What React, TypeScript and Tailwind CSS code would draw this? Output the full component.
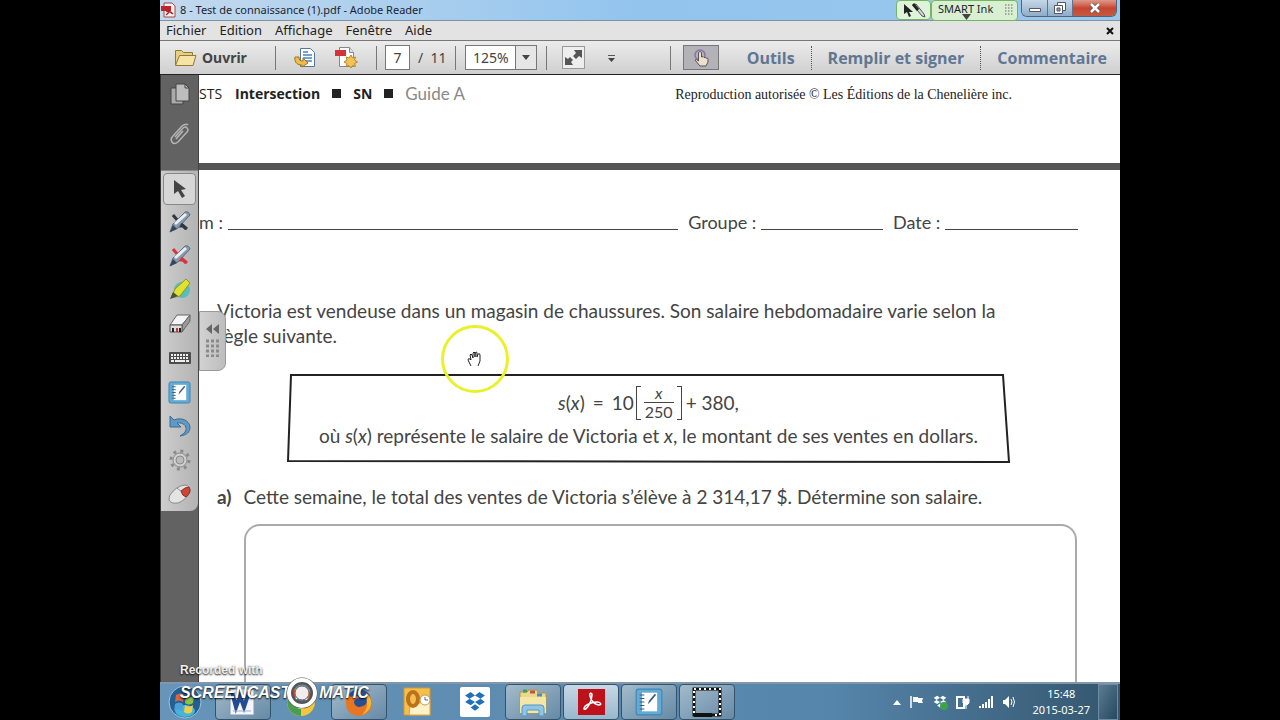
import type { ReactNode } from "react";

function Svg({ w, h, children }: { w: number; h: number; children: ReactNode }) {
  return (
    <svg width={w} height={h} viewBox={`0 0 ${w} ${h}`} fill="none" className="shrink-0" aria-hidden="true">
      {children}
    </svg>
  );
}

function TitleBar() {
  return (
    <header className="flex h-5 items-center bg-linear-to-r from-[#c3d9ed] via-[#92c4ee] to-[#9bc8ec] pl-px text-[11px] text-[#1b2530]">
      <Svg w={15} h={16}>
        <path d="M3 1h8l3 3v11H3z" fill="#f5f0ef" stroke="#9a4a48" />
        <path d="M0 4h10v5H0z" fill="#c3242b" />
        <path d="M5 13c3-2 4-6 4-8M5 9c3 0 5 1 7 3" stroke="#a82a2c" strokeWidth="1.500" />
      </Svg>
      <h1 className="ml-1 whitespace-nowrap">8 - Test de connaissance (1).pdf - Adobe Reader</h1>
      <div className="ml-auto flex h-5 items-start">
        <button aria-label="Stylo" className="flex h-5 w-[35px] items-center justify-center rounded-sm border border-[#72b562] bg-[#dff2da]">
          <Svg w={24} h={15}>
            <path d="M2 1v10l3-2 2 5 2-1-2-4h4z" fill="#222" />
            <path d="M11 2l9 11 3 1-1-3L14 1z" fill="#d5d5d5" stroke="#555" />
            <path d="M11 1l5 6" stroke="#222" strokeWidth="3" />
          </Svg>
        </button>
        <button className="relative flex h-[21px] w-[87px] items-start gap-3 rounded-sm border border-[#72b562] bg-[#d8efd2] pl-[6px] text-[11px] leading-[15px]">
          SMART Ink
          <Svg w={8} h={16}>
            {[4, 7, 10, 13].map((y) => (
              <path key={y} d={`M0 ${y}h1.500M3 ${y}h1.500M6 ${y}h1.500`} stroke="#666" />
            ))}
          </Svg>
          <span className="absolute top-[13px] left-[30px]">
            <Svg w={9} h={6}>
              <path d="M0 0h9L4.500 6z" fill="#444" />
            </Svg>
          </span>
        </button>
        <div className="mr-[3px] ml-[3px] flex h-[17px] overflow-hidden rounded-b-md border border-t-0 border-[#50647a]">
          <button aria-label="Réduire" className="flex w-[26px] items-center justify-center border-r border-[#60758a] bg-linear-to-b from-[#c6d8e8] to-[#8eacc8]">
            <Svg w={12} h={12}>
              <path d="M.5 6.500h11v3H.5z" fill="#fff" stroke="#556" />
            </Svg>
          </button>
          <button aria-label="Niveau inférieur" className="flex w-[25px] items-center justify-center border-r border-[#60758a] bg-linear-to-b from-[#c6d8e8] to-[#8eacc8]">
            <Svg w={12} h={12}>
              <path d="M3.500.5h8v8h-8z" fill="#fff" stroke="#556" />
              <path d="M.5 3.500h8v8h-8z" fill="#fff" stroke="#556" />
              <path d="M3 6h3v3H3z" fill="#8aa" stroke="#556" />
            </Svg>
          </button>
          <button aria-label="Fermer" className="flex w-[43px] items-center justify-center bg-linear-to-b from-[#dc9a8c] via-[#c8452f] to-[#c45a42]">
            <Svg w={12} h={10}>
              <path d="M2 1l8 8M10 1L2 9" stroke="#555" strokeWidth="4" />
              <path d="M2 1l8 8M10 1L2 9" stroke="#fff" strokeWidth="2.500" />
            </Svg>
          </button>
        </div>
      </div>
    </header>
  );
}

function MenuBar() {
  return (
    <nav className="flex h-5 items-center gap-[13px] border-t border-[#7c92a5] bg-[#e3e3e3] px-[6px] text-[13px] text-[#222]">
      {["Fichier", "Edition", "Affichage", "Fenêtre", "Aide"].map((label) => (
        <button key={label}>{label}</button>
      ))}
      <button aria-label="Fermer le document" className="ml-auto">
        <Svg w={8} h={8}>
          <path d="M1 1l6 6M7 1L1 7" stroke="#111" strokeWidth="2" />
        </Svg>
      </button>
    </nav>
  );
}

function Separator() {
  return <span className="h-6 w-px shrink-0 bg-[#777]" />;
}

function ToolBar() {
  return (
    <div className="flex h-[35px] shrink-0 items-center border-t border-b border-t-[#777] border-b-[#222] bg-linear-to-b from-[#ececec] to-[#cfcfcf] pl-[14px] text-[14px] text-[#444]">
      <button className="flex w-[101px] items-center gap-[5px] font-bold">
        <Svg w={23} h={19}>
          <path d="M1.500 17V2.500h6l2 2h9V8" fill="#e8cf82" stroke="#92783a" />
          <path d="M1.500 17.500l4-10h16.500l-3 10z" fill="#f5e4a5" stroke="#92783a" />
        </Svg>
        Ouvrir
      </button>
      <Separator />
      <div className="flex w-[100px] items-center justify-center gap-[18px]">
        <button aria-label="Convertir">
          <Svg w={23} h={21}>
            <path d="M6.500 1.500h10l4 4v14h-14z" fill="#fff" stroke="#587995" />
            <path d="M9 5h5M9 8h9M9 11h9M9 14h9" stroke="#4782bd" strokeWidth="1.500" />
            <path d="M1 10c-1 6 3 8 7 8v2l6-4-5-5v3c-3 0-4-1-4-4z" fill="#f0bd48" stroke="#9f7422" />
          </Svg>
        </button>
        <button aria-label="Créer un PDF">
          <Svg w={23} h={21}>
            <path d="M4.500.5h10l4 5v14h-14z" fill="#fff" stroke="#888" />
            <path d="M14.500.5v5h4" fill="#ddd" stroke="#888" />
            <path d="M0 3h11v6H0z" fill="#d5323a" />
            <path d="M16 8l1.500 3 3-1-1 3 3 2-3 1.500 1 3-3-1L16 21l-2-2.500-3 1 1-3L9 15l3-2-1-3 3 1z" fill="#f4c354" stroke="#b7872d" />
          </Svg>
        </button>
      </div>
      <Separator />
      <input
        aria-label="Page"
        defaultValue="7"
        className="ml-[8px] h-[25px] w-[25px] border border-[#777] bg-white text-center outline-none"
      />
      <span className="ml-[8px] w-[37px] whitespace-nowrap">/&nbsp; 11</span>
      <Separator />
      <div className="relative ml-[9px] h-[25px] w-[72px] border border-[#777] bg-white">
        <select aria-label="Zoom" defaultValue="125%" className="h-full w-full appearance-none pl-[7px] outline-none">
          <option>100%</option>
          <option>125%</option>
          <option>150%</option>
        </select>
        <span className="pointer-events-none absolute inset-y-0 right-0 flex w-[21px] items-center justify-center border-l border-[#777] bg-[#e6e6e6]">
          <Svg w={8} h={5}>
            <path d="M0 0h8L4 5z" fill="#444" />
          </Svg>
        </span>
      </div>
      <span className="w-[9px]" />
      <Separator />
      <button aria-label="Plein écran" className="ml-[15px] flex size-[23px] items-center justify-center border border-[#999] bg-[#eee]">
        <Svg w={19} h={19}>
          <path d="M10 2h8v8l-3-2-3 3-3-3 3-3zM9 17H1V9l3 2 2-2 3 3-2 2z" fill="#555" />
        </Svg>
      </button>
      <button aria-label="Plus d'outils" className="ml-[23px]">
        <Svg w={7} h={8}>
          <path d="M0 1.500h7" stroke="#555" />
          <path d="M0 4h7L3.500 8z" fill="#444" />
        </Svg>
      </button>
      <span className="w-[55px]" />
      <Separator />
      <button aria-label="Main" className="ml-[12px] flex h-[25px] w-[36px] items-center justify-center border border-[#777] bg-[#b3b3b7]">
        <Svg w={18} h={18}>
          <circle cx="8" cy="6" r="5" stroke="#8872a8" strokeWidth="1.500" />
          <path d="M6.500 11V3.500q1.500-2 3 0V8q2-1 2.500.5 2-.5 2 .7 2-.5 2 1V13l-2 4H8l-5-6q1-1.500 3.500 1z" fill="#eee0cd" stroke="#555" />
        </Svg>
      </button>
      <div className="ml-auto flex h-full items-center font-['Open_Sans',sans-serif] text-[16px] font-bold text-[#607693]">
        <button className="px-4">Outils</button>
        <span className="h-6 border-l border-dotted border-[#555]" />
        <button className="px-4">Remplir et signer</button>
        <span className="h-6 border-l border-dotted border-[#555]" />
        <button className="pr-[13px] pl-4">Commentaire</button>
      </div>
    </div>
  );
}

function Pen({ color }: { color: string }) {
  return (
    <Svg w={24} h={24}>
      <path d="M5 5l5 6 8 8M6 16h8" stroke={color} strokeWidth="3" />
      <path d="M2 22l3-8L17 2q4-1 5 3L10 18z" fill="#8999ac" stroke="#5d6c7e" />
      <path d="M7 14L18 4" stroke="#e8eef4" strokeWidth="3" />
      <path d="M2 22l3-7 4 4z" fill="#33475c" />
      <path d="M13 14l6 5" stroke={color} strokeWidth="3" />
    </Svg>
  );
}

function Notebook({ size }: { size: number }) {
  return (
    <svg width={size} height={size} viewBox="0 0 24 24" fill="none" aria-hidden="true">
      <rect x="1" y="1" width="22" height="22" rx="2" fill="#62abd6" stroke="#3f86b3" />
      <path d="M6 4h13v16H6z" fill="#fff" />
      <path d="M4 6h4M4 9h4M4 12h4M4 15h4M4 18h4" stroke="#335f80" />
      <path d="M11 14l1-3 5-6 1 1-5 6z" fill="#38566e" />
    </svg>
  );
}

const smartTools = [
  {
    name: "Sélectionner",
    icon: (
      <Svg w={16} h={20}>
        <path d="M2 1v14l4-3 4 7 3-2-4-6 5-1z" fill="#444" />
      </Svg>
    ),
  },
  { name: "Stylo noir", icon: <Pen color="#303740" /> },
  { name: "Stylo rouge", icon: <Pen color="#d9363b" /> },
  {
    name: "Surligneur",
    icon: (
      <Svg w={24} h={24}>
        <circle cx="14" cy="12" r="8" fill="#58bdbd" />
        <path d="M3 20l4-9L18 1l4 4-10 13z" fill="#e2e22c" stroke="#8d9625" />
        <path d="M2 21l3-7 5 4z" fill="#4c5040" />
      </Svg>
    ),
  },
  {
    name: "Gomme",
    icon: (
      <Svg w={24} h={22}>
        <path d="M2 12L9 2h13l-8 10z" fill="#f5f5f5" stroke="#666" />
        <path d="M14 12l8-10v6l-8 11z" fill="#9a9a9a" stroke="#666" />
        <path d="M2 12h12v7H2z" fill="#ddd" stroke="#555" />
        <path d="M4 17h2M11 17h2" stroke="#222" strokeWidth="4" />
        <path d="M8 17h2" stroke="#c33" strokeWidth="4" />
      </Svg>
    ),
  },
  {
    name: "Clavier",
    icon: (
      <Svg w={24} h={14}>
        <rect x="1" y="1" width="22" height="12" rx="1" fill="#4d4d4d" />
        <path d="M3 4h18M3 7h18" stroke="#eee" strokeWidth="2" strokeDasharray="2 1" />
        <path d="M3 10h3M7 10h10M18 10h3" stroke="#eee" strokeWidth="2" />
      </Svg>
    ),
  },
  { name: "Notebook", icon: <Notebook size={23} /> },
  {
    name: "Annuler",
    icon: (
      <Svg w={24} h={22}>
        <path d="M2 1v11h11L9 8c6-1 10 3 9 7-1 3-3 4-6 6 7-1 10-4 10-9C21 5 13 2 6 5z" fill="#5e9ac5" stroke="#3c6c91" />
      </Svg>
    ),
  },
  {
    name: "Paramètres",
    icon: (
      <Svg w={22} h={22}>
        <circle cx="11" cy="11" r="9" stroke="#8b8b8b" strokeWidth="3" strokeDasharray="3 4.070" />
        <circle cx="11" cy="11" r="7" fill="#cfcfcf" stroke="#8b8b8b" />
        <circle cx="11" cy="11" r="4" fill="#bbb" stroke="#8b8b8b" />
      </Svg>
    ),
  },
  {
    name: "Clic droit",
    icon: (
      <Svg w={24} h={22}>
        <path d="M2 12Q8 3 17 2q6 1 5 7-4 8-12 11-7 1-9-3 0-3 1-5z" fill="#e4e4e4" stroke="#888" />
        <path d="M13 8q4-4 8-4 3 5-3 10-4-1-5-6z" fill="#cf4634" stroke="#833" />
        <path d="M13 8q-3-2-4-3" stroke="#888" />
      </Svg>
    ),
  },
];

function SidePanel() {
  return (
    <aside className="flex w-[39px] shrink-0 flex-col border-r border-l border-r-[#444] border-l-[#333] bg-[#626262]">
      <div className="flex h-[95px] flex-col items-center gap-[18px] pt-2">
        <button aria-label="Vignettes">
          <Svg w={20} h={22}>
            <path d="M1 5h12v16H1z" fill="#aaa" stroke="#444" />
            <path d="M6 1h9l4 4v13H6z" fill="#bdbdbd" stroke="#444" />
            <path d="M15 1v4h4" stroke="#444" />
          </Svg>
        </button>
        <button aria-label="Pièces jointes">
          <Svg w={20} h={22}>
            <path d="M5 14l8-9q3-2 4 0 2 2 0 4l-9 10q-4 3-6 0-2-3 1-6l9-10q4-3 6-1M13 8l-7 8" stroke="#b5b5b5" strokeWidth="1.500" />
          </Svg>
        </button>
      </div>
      <div className="rounded-br-lg border-t border-[#888] bg-linear-to-r from-[#cdcdcd] to-[#b3b3b3]">
        {smartTools.map((tool, i) => (
          <button
            key={tool.name}
            aria-label={tool.name}
            className={
              i === 0
                ? "mt-[2px] ml-[2px] flex h-8 w-[33px] items-center justify-center rounded-sm border border-[#888] bg-[#d6d6d6]"
                : "flex h-[34px] w-full items-center justify-center"
            }
          >
            {tool.icon}
          </button>
        ))}
      </div>
    </aside>
  );
}

function PullTab() {
  return (
    <button aria-label="Masquer la barre" className="absolute top-[236px] left-0 flex h-[60px] w-[27px] flex-col items-center gap-1 rounded-r-lg border border-[#999] bg-linear-to-r from-[#d2d2d2] to-[#bdbdbd] pt-[11px]">
      <Svg w={14} h={12}>
        <path d="M6 1v10L0 6zM13 1v10L7 6z" fill="#666" />
      </Svg>
      <Svg w={13} h={18}>
        {[2, 7, 12, 17].map((y) => (
          <path key={y} d={`M0 ${y}h3M5 ${y}h3M10 ${y}h3`} stroke="#8a8a8a" strokeWidth="3" />
        ))}
      </Svg>
    </button>
  );
}

function HandCursor() {
  return (
    <div className="pointer-events-none absolute top-[250px] left-[242px] flex size-[68px] items-center justify-center rounded-full border-[3px] border-[#eaf02c]">
      <Svg w={18} h={18}>
        <path d="M5 16L2 10q0-2 2-1l1 1-1-5q1-2 2 0l1 3V3q1-2 2 0v4-4q2-2 2 0v4l1-3q2-1 2 1v6l-2 5" fill="#fff" stroke="#222" />
      </Svg>
    </div>
  );
}

function Formula() {
  return (
    <div className="flex items-center justify-center">
      <span className="flex gap-2">
        <span>
          <i>s</i>(<i>x</i>)
        </span>
        <span>=</span>
        <span>10</span>
      </span>
      <span className="ml-[2px] h-[34px] w-[5px] border-y border-l border-[#444]" />
      <span className="mx-[3px] flex flex-col items-center text-[16px] leading-[18px]">
        <i>x</i>
        <span className="border-t border-[#444] px-px">250</span>
      </span>
      <span className="mr-[4px] h-[34px] w-[5px] border-y border-r border-[#444]" />
      <span>+ 380,</span>
    </div>
  );
}

function Document() {
  return (
    <main className="relative flex min-w-0 flex-1 flex-col overflow-hidden bg-white font-['Lato',sans-serif] text-[19px] leading-[25px] text-[#444]">
      <div className="flex h-[88px] shrink-0 items-start pt-[6px] font-['Open_Sans',sans-serif] text-[14px] text-[#222]">
        <span className="w-9">STS</span>
        <div className="flex items-center gap-3">
          <b>Intersection</b>
          <span className="size-[9px] bg-[#222]" />
          <b>SN</b>
          <span className="size-[9px] bg-[#222]" />
          <span className="font-['Lato',sans-serif] text-[17px] text-[#888]">Guide A</span>
        </div>
        <p className="mr-[108px] ml-auto font-['Liberation_Serif',serif] leading-7">
          Reproduction autorisée © Les Éditions de la Chenelière inc.
        </p>
      </div>
      <div className="h-[7px] shrink-0 bg-[#555]" />
      <div className="flex flex-1 flex-col pt-[40px]">
        <div className="mr-[42px] flex items-end gap-[5px] text-[18px]">
          <span>m :</span>
          <span className="mb-[5px] flex-[455] border-b border-[#444]" />
          <span className="ml-[5px]">Groupe :</span>
          <span className="mb-[5px] flex-[123] border-b border-[#444]" />
          <span className="ml-[5px]">Date :</span>
          <span className="mb-[5px] flex-[134] border-b border-[#444]" />
        </div>
        <p className="mt-[63px] ml-[18px]">
          Victoria est vendeuse dans un magasin de chaussures. Son salaire hebdomadaire varie selon la
          <br />
          règle suivante.
        </p>
        <div className="relative mt-[26px] mr-[110px] ml-[88px] flex h-[89px] flex-col gap-[2px] pt-[10px]">
          <svg className="absolute inset-0 h-full w-full" viewBox="0 0 723 89" preserveAspectRatio="none" fill="none" aria-hidden="true">
            <path d="M4 1L716 1L722 88L1 87Z" stroke="#222" strokeWidth="2" />
          </svg>
          <Formula />
          <p className="text-center whitespace-nowrap">
            où <i>s</i>(<i>x</i>) représente le salaire de Victoria et <i>x</i>, le montant de ses ventes en dollars.
          </p>
        </div>
        <div className="mt-[21px] ml-[18px] flex gap-3 whitespace-nowrap">
          <b>a)</b>
          <p>Cette semaine, le total des ventes de Victoria s’élève à 2 314,17 $. Détermine son salaire.</p>
        </div>
        <div className="mt-[15px] mr-[43px] ml-[45px] flex-1 rounded-t-2xl border-2 border-b-0 border-[#aaa]" />
      </div>
      <PullTab />
      <HandCursor />
    </main>
  );
}

function DropboxMark({ size, color }: { size: number; color: string }) {
  return (
    <svg width={size} height={size} viewBox="0 0 20 20" fill={color} aria-hidden="true">
      <path d="M6 1l4 3-5 3-4-3zM14 1l5 3-4 3-5-3zM5 7l5 3-4 3-5-3zM15 7l4 3-5 3-4-3zM10 12l4 3-4 3-4-3z" />
    </svg>
  );
}

const apps = [
  {
    name: "Word",
    open: true,
    icon: (
      <Svg w={30} h={30}>
        <path d="M2 2h24v26H2z" fill="#f3f6fa" stroke="#7e97b5" />
        <path d="M4 5l4 15 4-11 4 11 5-15" stroke="#234c94" strokeWidth="4" />
        <path d="M5 24h18" stroke="#9fb2cc" />
      </Svg>
    ),
  },
  {
    name: "Chrome",
    open: false,
    icon: (
      <Svg w={30} h={30}>
        <circle cx="15" cy="15" r="14" fill="#f3c73b" />
        <path d="M15 15L3 8a14 14 0 0 1 24 0z" fill="#d9453a" />
        <path d="M15 15L3 8a14 14 0 0 0 12 21z" fill="#4b9e4d" />
        <circle cx="15" cy="15" r="6" fill="#3b72b8" stroke="#fff" strokeWidth="2" />
      </Svg>
    ),
  },
  {
    name: "Firefox",
    open: true,
    icon: (
      <Svg w={30} h={30}>
        <circle cx="15" cy="14" r="12" fill="#294f93" />
        <path d="M2 7q3 0 5 3 5-3 9 1-6 0-6 5 3 7 11 2 4-4 1-12 7 5 6 12-2 10-13 11Q2 28 2 16z" fill="#e87522" />
        <path d="M22 6q8 7 4 15-3 5-8 7 6-7 5-12z" fill="#f6b62f" />
      </Svg>
    ),
  },
  {
    name: "Outlook",
    open: false,
    icon: (
      <Svg w={30} h={30}>
        <path d="M2 1h26v27H2z" fill="#f3c04d" stroke="#d8962b" />
        <path d="M8 19l20-6v15H7z" fill="#fff2c6" stroke="#d8a448" />
        <ellipse cx="11" cy="12" rx="5" ry="7" stroke="#bd711a" strokeWidth="4" />
        <circle cx="23" cy="13" r="5" fill="#fff" stroke="#c89855" />
        <path d="M23 10v3h3" stroke="#666" />
      </Svg>
    ),
  },
  {
    name: "Dropbox",
    open: false,
    icon: (
      <span className="flex size-[30px] items-center justify-center rounded-xs bg-white">
        <DropboxMark size={22} color="#2170bd" />
      </span>
    ),
  },
  {
    name: "Explorateur",
    open: true,
    icon: (
      <Svg w={30} h={30}>
        <path d="M2 5h7l2-2h8l1 3h8v20H2z" fill="#ead98a" stroke="#a99750" />
        <path d="M5 4h4" stroke="#4c9a4d" strokeWidth="3" />
        <path d="M12 5h5" stroke="#c45142" strokeWidth="3" />
        <path d="M19 8h5" stroke="#4c8bc2" strokeWidth="3" />
        <path d="M2 10h26v16H2z" fill="#f3e6a6" />
        <path d="M4 29v-8q0-3 3-3h16q3 0 3 3v8h-5v-6H9v6z" fill="#8fc5e6" stroke="#5797c0" />
      </Svg>
    ),
  },
  {
    name: "Adobe Reader",
    open: true,
    icon: (
      <Svg w={27} h={26}>
        <path d="M0 0h27v26H0z" fill="#bd1219" />
        <path d="M6 20c2 2 8-7 8-14 0-3-3-2-2 1 1 5 5 9 9 9 3 0 2-3-2-3-5 0-13 3-13 7z" stroke="#fff" strokeWidth="1.500" />
      </Svg>
    ),
  },
  { name: "SMART Notebook", open: true, icon: <Notebook size={28} /> },
  {
    name: "Enregistreur",
    open: true,
    icon: (
      <Svg w={30} h={30}>
        <path d="M2 2h26v26H2z" stroke="#111" strokeWidth="3" />
        <path d="M2 2h26v26H2z" stroke="#fff" strokeWidth="2" strokeDasharray="2 3" />
        <path d="M2 28h18" stroke="#111" strokeWidth="4" />
      </Svg>
    ),
  },
];

function Watermark() {
  return (
    <div className="pointer-events-none absolute bottom-[10px] left-5 z-10 font-['Liberation_Sans',sans-serif] font-bold text-white text-shadow-[0_1px_2px_#000]">
      <p className="text-[12px] leading-3 text-[#eee]">Recorded with</p>
      <div className="flex items-center text-[16px] leading-8 italic">
        SCREENCAST
        <span className="-ml-[5px]">
          <Svg w={34} h={34}>
            <circle cx="17" cy="17" r="12" stroke="#555" strokeWidth="7" />
            <circle cx="17" cy="17" r="13" stroke="#fff" strokeWidth="4" />
            <circle cx="17" cy="17" r="7" fill="#f2eeee" stroke="#765" />
          </Svg>
        </span>
        MATIC
      </div>
    </div>
  );
}

function TaskBar() {
  return (
    <footer className="flex h-[38px] shrink-0 items-center border-t-2 border-[#8298aa] bg-linear-to-r from-[#6794b8] via-[#5685ab] via-70% to-[#34566e] text-white">
      <button aria-label="Démarrer" className="mr-[12px] ml-[7px]">
        <Svg w={36} h={36}>
          <circle cx="18" cy="18" r="16" fill="#245f93" stroke="#9dc6de" />
          <ellipse cx="18" cy="27" rx="10" ry="6" fill="#45b5dc" />
          <path d="M9 11q4-3 8 0l-1 7q-4-3-8 0z" fill="#dd6540" />
          <path d="M19 12q4 3 8 0l-1 7q-4 3-8 0z" fill="#8bc34a" />
          <path d="M8 20q4-3 8 0l-1 7q-4-3-8 0z" fill="#4ba0d8" />
          <path d="M18 21q4 3 8 0l-1 7q-4 3-8 0z" fill="#f2ce45" />
        </Svg>
      </button>
      <div className="flex h-full gap-[2px]">
        {apps.map((app) => (
          <button
            key={app.name}
            aria-label={app.name}
            className={
              app.name === "Adobe Reader"
                ? "flex w-14 items-center justify-center rounded-sm border border-[#34536b] bg-linear-to-b from-[#c7d8e5] to-[#9ab7cd]"
                : app.open
                  ? "flex w-14 items-center justify-center rounded-sm border border-[#34536b] bg-linear-to-br from-[#a3bbcc] to-[#668aa6]"
                  : "flex w-14 items-center justify-center"
            }
          >
            {app.icon}
          </button>
        ))}
      </div>
      <div className="ml-auto flex items-center gap-[9px]">
        <Svg w={8} h={5}>
          <path d="M0 5h8L4 0z" fill="#fff" />
        </Svg>
        <Svg w={14} h={14}>
          <path d="M1 1v12" stroke="#fff" strokeWidth="1.500" />
          <path d="M3 2h5v1h5l-1 3 1 2H8V7H3z" fill="#fff" />
        </Svg>
        <span className="relative">
          <DropboxMark size={14} color="#fff" />
          <span className="absolute -right-px -bottom-px size-2 rounded-full bg-[#3ba34b]" />
        </span>
        <Svg w={14} h={14}>
          <path d="M1 2h7v11H1z" stroke="#fff" strokeWidth="2" />
          <path d="M7 4h6v4l-2 2H9L7 8zM8 1v3M12 1v3M10 10v4" fill="#fff" stroke="#fff" />
        </Svg>
        <Svg w={14} h={14}>
          <path d="M1 13v-2M4 13V9M7 13V7M10 13V4M13 13V1" stroke="#fff" strokeWidth="2" />
        </Svg>
        <Svg w={14} h={14}>
          <path d="M1 5h2l4-4v12L3 9H1z" fill="#fff" />
          <path d="M9 4q2 3 0 6M11 2q3 5 0 10" stroke="#fff" />
        </Svg>
      </div>
      <p className="mr-[8px] ml-[17px] text-center text-[11px] leading-4">
        15:48
        <br />
        2015-03-27
      </p>
      <button aria-label="Afficher le Bureau" className="mr-[2px] h-full w-5 border border-[#6d8ba2] bg-linear-to-br from-[#5c7c94] to-[#27485f]" />
    </footer>
  );
}

export default function App() {
  return (
    <div className="flex h-screen bg-black font-['Noto_Sans',sans-serif]">
      <div className="relative mx-auto flex w-3/4 flex-col">
        <TitleBar />
        <MenuBar />
        <ToolBar />
        <div className="flex min-h-0 flex-1">
          <SidePanel />
          <Document />
        </div>
        <TaskBar />
        <Watermark />
      </div>
    </div>
  );
}
